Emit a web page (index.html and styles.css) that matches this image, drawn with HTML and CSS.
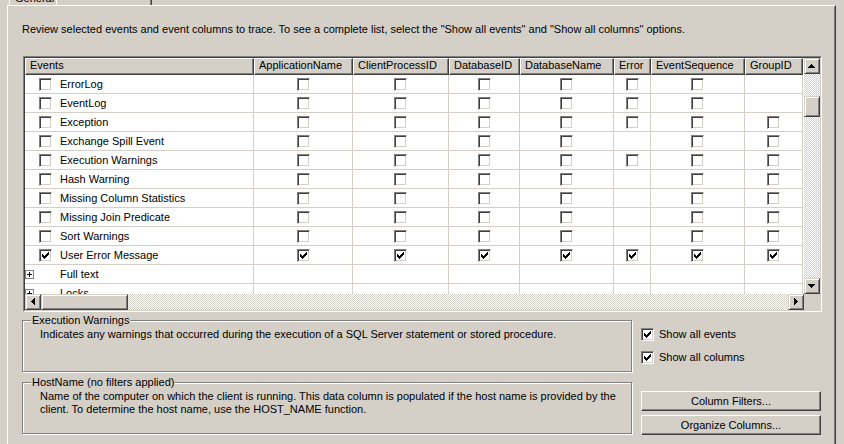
FILE: index.html
```html
<!DOCTYPE html>
<html>
<head>
<meta charset="utf-8">
<title>Events Selection</title>
<link rel="stylesheet" href="styles.css">
</head>
<body>
<div class="tabs">
  <div class="tab tab-general"><span class="tab-label">General</span></div>
  <div class="tab tab-events"></div>
</div>
<div class="page">
  <p class="intro">Review selected events and event columns to trace. To see a complete list, select the "Show all events" and "Show all columns" options.</p>

  <div class="grid">
    <div class="grid-inner">
      <div class="table">
        <div class="row head">
          <div class="th">Events</div>
          <div class="th">ApplicationName</div>
          <div class="th">ClientProcessID</div>
          <div class="th">DatabaseID</div>
          <div class="th">DatabaseName</div>
          <div class="th">Error</div>
          <div class="th">EventSequence</div>
          <div class="th">GroupID</div>
        </div>

        <div class="row">
          <div class="ev"><span class="cb"></span><span class="ev-name">ErrorLog</span></div>
          <div class="td"><span class="cb"></span></div>
          <div class="td"><span class="cb"></span></div>
          <div class="td"><span class="cb"></span></div>
          <div class="td"><span class="cb"></span></div>
          <div class="td"><span class="cb"></span></div>
          <div class="td"><span class="cb"></span></div>
          <div class="td"></div>
        </div>
        <div class="row">
          <div class="ev"><span class="cb"></span><span class="ev-name">EventLog</span></div>
          <div class="td"><span class="cb"></span></div>
          <div class="td"><span class="cb"></span></div>
          <div class="td"><span class="cb"></span></div>
          <div class="td"><span class="cb"></span></div>
          <div class="td"><span class="cb"></span></div>
          <div class="td"><span class="cb"></span></div>
          <div class="td"></div>
        </div>
        <div class="row">
          <div class="ev"><span class="cb"></span><span class="ev-name">Exception</span></div>
          <div class="td"><span class="cb"></span></div>
          <div class="td"><span class="cb"></span></div>
          <div class="td"><span class="cb"></span></div>
          <div class="td"><span class="cb"></span></div>
          <div class="td"><span class="cb"></span></div>
          <div class="td"><span class="cb"></span></div>
          <div class="td"><span class="cb"></span></div>
        </div>
        <div class="row">
          <div class="ev"><span class="cb"></span><span class="ev-name">Exchange Spill Event</span></div>
          <div class="td"><span class="cb"></span></div>
          <div class="td"><span class="cb"></span></div>
          <div class="td"><span class="cb"></span></div>
          <div class="td"><span class="cb"></span></div>
          <div class="td"></div>
          <div class="td"><span class="cb"></span></div>
          <div class="td"><span class="cb"></span></div>
        </div>
        <div class="row">
          <div class="ev"><span class="cb"></span><span class="ev-name">Execution Warnings</span></div>
          <div class="td"><span class="cb"></span></div>
          <div class="td"><span class="cb"></span></div>
          <div class="td"><span class="cb"></span></div>
          <div class="td"><span class="cb"></span></div>
          <div class="td"><span class="cb"></span></div>
          <div class="td"><span class="cb"></span></div>
          <div class="td"><span class="cb"></span></div>
        </div>
        <div class="row">
          <div class="ev"><span class="cb"></span><span class="ev-name">Hash Warning</span></div>
          <div class="td"><span class="cb"></span></div>
          <div class="td"><span class="cb"></span></div>
          <div class="td"><span class="cb"></span></div>
          <div class="td"><span class="cb"></span></div>
          <div class="td"></div>
          <div class="td"><span class="cb"></span></div>
          <div class="td"><span class="cb"></span></div>
        </div>
        <div class="row">
          <div class="ev"><span class="cb"></span><span class="ev-name">Missing Column Statistics</span></div>
          <div class="td"><span class="cb"></span></div>
          <div class="td"><span class="cb"></span></div>
          <div class="td"><span class="cb"></span></div>
          <div class="td"><span class="cb"></span></div>
          <div class="td"></div>
          <div class="td"><span class="cb"></span></div>
          <div class="td"><span class="cb"></span></div>
        </div>
        <div class="row">
          <div class="ev"><span class="cb"></span><span class="ev-name">Missing Join Predicate</span></div>
          <div class="td"><span class="cb"></span></div>
          <div class="td"><span class="cb"></span></div>
          <div class="td"><span class="cb"></span></div>
          <div class="td"><span class="cb"></span></div>
          <div class="td"></div>
          <div class="td"><span class="cb"></span></div>
          <div class="td"><span class="cb"></span></div>
        </div>
        <div class="row">
          <div class="ev"><span class="cb"></span><span class="ev-name">Sort Warnings</span></div>
          <div class="td"><span class="cb"></span></div>
          <div class="td"><span class="cb"></span></div>
          <div class="td"><span class="cb"></span></div>
          <div class="td"><span class="cb"></span></div>
          <div class="td"></div>
          <div class="td"><span class="cb"></span></div>
          <div class="td"><span class="cb"></span></div>
        </div>
        <div class="row">
          <div class="ev"><span class="cb"><svg class="ck" viewBox="1 1 11 11" width="11" height="11"><path d="M3 5h1v3H3zM4 6h1v3H4zM5 7h1v3H5zM6 6h1v3H6zM7 5h1v3H7zM8 4h1v3H8zM9 3h1v3H9z"/></svg></span><span class="ev-name">User Error Message</span></div>
          <div class="td"><span class="cb"><svg class="ck" viewBox="1 1 11 11" width="11" height="11"><path d="M3 5h1v3H3zM4 6h1v3H4zM5 7h1v3H5zM6 6h1v3H6zM7 5h1v3H7zM8 4h1v3H8zM9 3h1v3H9z"/></svg></span></div>
          <div class="td"><span class="cb"><svg class="ck" viewBox="1 1 11 11" width="11" height="11"><path d="M3 5h1v3H3zM4 6h1v3H4zM5 7h1v3H5zM6 6h1v3H6zM7 5h1v3H7zM8 4h1v3H8zM9 3h1v3H9z"/></svg></span></div>
          <div class="td"><span class="cb"><svg class="ck" viewBox="1 1 11 11" width="11" height="11"><path d="M3 5h1v3H3zM4 6h1v3H4zM5 7h1v3H5zM6 6h1v3H6zM7 5h1v3H7zM8 4h1v3H8zM9 3h1v3H9z"/></svg></span></div>
          <div class="td"><span class="cb"><svg class="ck" viewBox="1 1 11 11" width="11" height="11"><path d="M3 5h1v3H3zM4 6h1v3H4zM5 7h1v3H5zM6 6h1v3H6zM7 5h1v3H7zM8 4h1v3H8zM9 3h1v3H9z"/></svg></span></div>
          <div class="td"><span class="cb"><svg class="ck" viewBox="1 1 11 11" width="11" height="11"><path d="M3 5h1v3H3zM4 6h1v3H4zM5 7h1v3H5zM6 6h1v3H6zM7 5h1v3H7zM8 4h1v3H8zM9 3h1v3H9z"/></svg></span></div>
          <div class="td"><span class="cb"><svg class="ck" viewBox="1 1 11 11" width="11" height="11"><path d="M3 5h1v3H3zM4 6h1v3H4zM5 7h1v3H5zM6 6h1v3H6zM7 5h1v3H7zM8 4h1v3H8zM9 3h1v3H9z"/></svg></span></div>
          <div class="td"><span class="cb"><svg class="ck" viewBox="1 1 11 11" width="11" height="11"><path d="M3 5h1v3H3zM4 6h1v3H4zM5 7h1v3H5zM6 6h1v3H6zM7 5h1v3H7zM8 4h1v3H8zM9 3h1v3H9z"/></svg></span></div>
        </div>
        <div class="row">
          <div class="ev ev-group"><span class="exp"><svg viewBox="1 1 7 7" width="7" height="7"><path d="M2 4h5v1H2zM4 2h1v5H4z"/></svg></span><span class="grp-name">Full text</span></div>
          <div class="td"></div><div class="td"></div><div class="td"></div><div class="td"></div>
          <div class="td"></div><div class="td"></div><div class="td"></div>
        </div>
        <div class="row">
          <div class="ev ev-group"><span class="exp"><svg viewBox="1 1 7 7" width="7" height="7"><path d="M2 4h5v1H2zM4 2h1v5H4z"/></svg></span><span class="grp-name">Locks</span></div>
          <div class="td"></div><div class="td"></div><div class="td"></div><div class="td"></div>
          <div class="td"></div><div class="td"></div><div class="td"></div>
        </div>
      </div>

      <div class="vscroll">
        <div class="sbtn"><svg viewBox="1 1 14 14" width="14" height="14"><path d="M7 6h1v1h1v1h1v1h1v1H4V9h1V8h1V7h1z"/></svg></div>
        <div class="track vtrack"><div class="thumb vthumb"></div></div>
        <div class="sbtn"><svg viewBox="1 1 14 14" width="14" height="14"><path d="M4 6h7v1h-1v1h-1v1h-1v1H7V9H6V8H5V7H4z"/></svg></div>
      </div>
      <div class="hscroll">
        <div class="sbtn"><svg viewBox="1 1 14 14" width="14" height="14"><path d="M6 7h1V6h1V5h1V4h1v7H9v-1H8V9H7V8H6z"/></svg></div>
        <div class="track htrack"><div class="thumb hthumb"></div></div>
        <div class="sbtn"><svg viewBox="1 1 14 14" width="14" height="14"><path d="M6 4h1v1h1v1h1v1h1v1H9v1H8v1H7v1H6z"/></svg></div>
      </div>
      <div class="corner"></div>
    </div>
  </div>

  <div class="bottom">
    <div class="groups">
      <div class="group">
        <div class="legend">Execution Warnings</div>
        <div class="desc">Indicates any warnings that occurred during the execution of a SQL Server statement or stored procedure.</div>
      </div>
      <div class="group">
        <div class="legend">HostName (no filters applied)</div>
        <div class="desc">Name of the computer on which the client is running. This data column is populated if the host name is provided by the<br>client. To determine the host name, use the HOST_NAME function.</div>
      </div>
    </div>
    <div class="side">
      <label class="opt opt-first"><span class="cb"><svg class="ck" viewBox="1 1 11 11" width="11" height="11"><path d="M3 5h1v3H3zM4 6h1v3H4zM5 7h1v3H5zM6 6h1v3H6zM7 5h1v3H7zM8 4h1v3H8zM9 3h1v3H9z"/></svg></span><span class="opt-text">Show all events</span></label>
      <label class="opt"><span class="cb"><svg class="ck" viewBox="1 1 11 11" width="11" height="11"><path d="M3 5h1v3H3zM4 6h1v3H4zM5 7h1v3H5zM6 6h1v3H6zM7 5h1v3H7zM8 4h1v3H8zM9 3h1v3H9z"/></svg></span><span class="opt-text">Show all columns</span></label>
      <button class="btn btn-first">Column Filters...</button>
      <button class="btn">Organize Columns...</button>
    </div>
  </div>
</div>
</body>
</html>
```

FILE: styles.css
```css
* { box-sizing: border-box; }
html, body { margin: 0; padding: 0; }
body {
  width: 844px;
  height: 444px;
  overflow: hidden;
  background: #d4d0c8;
  font-family: "Liberation Sans", Arial, sans-serif;
  font-size: 11px;
  line-height: 13px;
  color: #000;
}

/* tab strip (cut off at the top) */
.tabs { display: flex; height: 5px; padding-left: 9px; }
.tab { height: 5px; overflow: hidden; }
.tab-general { width: 47px; border-left: 1px solid #fff; }
.tab-label { display: block; margin-top: -8px; padding-left: 5px; white-space: nowrap; }
.tab-events { width: 96px; border-left: 1px solid #fff; border-right: 1px solid #404040; box-shadow: inset -1px 0 #808080; }

/* tab page */
.page {
  margin-left: 7px;
  width: 829px;
  height: 439px;
  border-left: 1px solid #fff;
  border-top: 1px solid #fff;
  border-right: 1px solid #404040;
  box-shadow: inset -1px 0 #808080;
  padding-left: 14px;
}
.intro { margin: 17px 0 0; white-space: nowrap; }

/* events grid */
.grid {
  margin: 20px 0 0 1px;
  width: 799px;
  height: 256px;
  border: 1px solid;
  border-color: #808080 #fff #fff #808080;
}
.grid-inner {
  height: 100%;
  border: 1px solid;
  border-color: #404040 #d4d0c8 #d4d0c8 #404040;
  display: grid;
  grid-template-columns: 779px 16px;
  grid-template-rows: 236px 16px;
}
.table { background: #fff; overflow: hidden; }
.row {
  display: grid;
  grid-template-columns: 229px 99px 96px 71px 94px 37px 94px 58px;
  height: 19px;
}
.head { height: 17px; }
.th {
  background: #d4d0c8;
  border: 1px solid;
  border-color: #fff #404040 #404040 #fff;
  box-shadow: inset -1px -1px #808080;
  padding-left: 4px;
  line-height: 12px;
  white-space: nowrap;
  overflow: hidden;
}
.td, .ev {
  border-right: 1px solid #d4d0c8;
  border-bottom: 1px solid #d4d0c8;
  display: flex;
  align-items: center;
}
.td { justify-content: center; }
.ev { padding-left: 14px; white-space: nowrap; }
.ev-name { margin-left: 8px; }
.ev-group { padding-left: 0; }
.grp-name { margin-left: 26px; }
.exp {
  width: 9px;
  height: 9px;
  border: 1px solid #808080;
  background: #fff;
  flex: none;
}
.exp svg { display: block; }

/* checkbox */
.cb {
  width: 13px;
  height: 13px;
  flex: none;
  background: #fff;
  border: 1px solid;
  border-color: #808080 #fff #fff #808080;
  box-shadow: inset 1px 1px #404040, inset -1px -1px #d4d0c8;
}
.ck { display: block; fill: #000; }

/* scrollbars */
.vscroll, .hscroll { display: flex; }
.vscroll { flex-direction: column; }
.track {
  flex: 1;
  background-color: #fff;
  background-image: repeating-conic-gradient(#d4d0c8 0 25%, #fff 0 50%);
  background-size: 2px 2px;
}
.sbtn, .thumb {
  background: #d4d0c8;
  border: 1px solid;
  border-color: #d4d0c8 #404040 #404040 #d4d0c8;
  box-shadow: inset 1px 1px #fff, inset -1px -1px #808080;
}
.sbtn { width: 16px; height: 16px; flex: none; }
.sbtn svg { display: block; fill: #000; }
.vthumb { margin-top: 22px; width: 16px; height: 21px; }
.hthumb { width: 87px; height: 16px; }
.corner { background: #d4d0c8; }

/* lower area */
.bottom { display: flex; margin-top: 8px; }
.groups { width: 610px; display: flex; flex-direction: column; gap: 10px; }
.group {
  height: 52px;
  border: 1px solid #808080;
  box-shadow: 1px 1px #fff, inset 1px 1px #fff;
  padding-left: 8px;
}
.legend {
  width: fit-content;
  margin-top: -7px;
  padding: 0 1px;
  background: #d4d0c8;
  white-space: nowrap;
}
.desc { margin: 1px 0 0 9px; white-space: nowrap; }

.side { margin-left: 9px; width: 180px; display: flex; flex-direction: column; }
.opt { display: flex; align-items: center; height: 13px; margin-top: 10px; }
.opt-first { margin-top: 8px; }
.opt-text { margin-left: 5px; white-space: nowrap; }
.btn {
  display: block;
  width: 180px;
  height: 20px;
  margin-top: 4px;
  padding: 0;
  background: #d4d0c8;
  border: 1px solid;
  border-color: #fff #404040 #404040 #fff;
  box-shadow: inset -1px -1px #808080;
  border-radius: 0;
  font: inherit;
  line-height: 13px;
  color: #000;
  text-align: center;
  appearance: none;
}
.btn-first { margin-top: 27px; }
```
